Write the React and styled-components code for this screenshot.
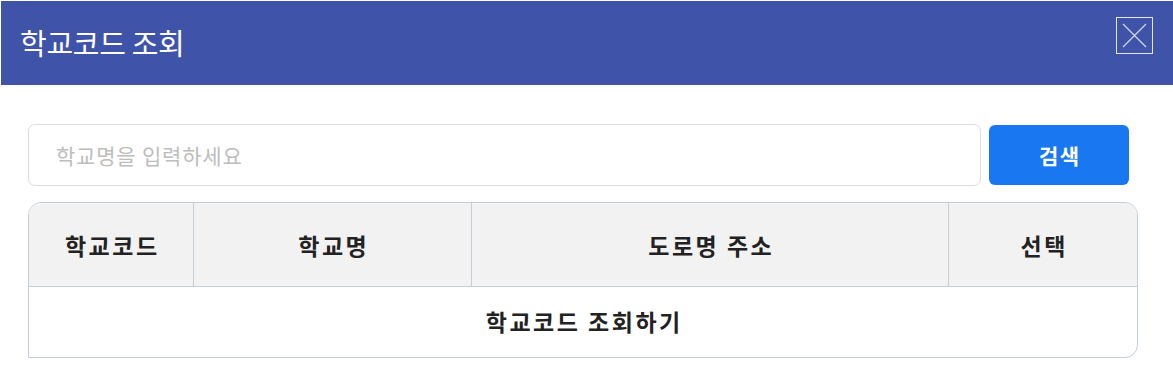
import React from "react";
import styled, { createGlobalStyle } from "styled-components";

const Global = createGlobalStyle`
  html, body { margin: 0; padding: 0; background: #fff; }
  body { font-family: "Noto Sans CJK KR", "Noto Sans", sans-serif; }
  * { box-sizing: border-box; }
`;

const Modal = styled.div`
  width: 1173px;
  height: 373px;
  background: #fff;
  display: flex;
  flex-direction: column;
  padding: 1px 0 0 1px;
`;

const Header = styled.header`
  height: 84px;
  background: #3f53a9;
  display: flex;
  align-items: center;
  justify-content: space-between;
  padding: 0 20px 0 19px;
`;

const Title = styled.h1`
  margin: 0;
  margin-top: -2px;
  color: #fff;
  font-size: 29px;
  font-weight: 400;
  letter-spacing: -0.3px;
`;

const CloseButton = styled.button`
  width: 37px;
  height: 37px;
  margin-top: -16px;
  border: 1px solid rgba(255, 255, 255, 0.85);
  background: transparent;
  padding: 0;
  display: flex;
  align-items: center;
  justify-content: center;
  cursor: pointer;
`;

const Body = styled.div`
  padding: 39px 35px 0 27px;
  display: flex;
  flex-direction: column;
  gap: 16px;
`;

const SearchRow = styled.div`
  display: flex;
  align-items: center;
  gap: 8px;
`;

const Input = styled.input`
  flex: 1;
  height: 62px;
  border: 1px solid #dcdcdc;
  border-radius: 7px;
  padding: 0 27px;
  font-family: inherit;
  font-size: 21px;
  letter-spacing: 0.8px;
  color: #333;
  outline: none;
  &::placeholder { color: #bdbdbd; }
`;

const SearchButton = styled.button`
  width: 140px;
  height: 60px;
  margin-right: 9px;
  border: none;
  border-radius: 6px;
  background: #1a77f2;
  color: #fff;
  font-family: inherit;
  font-size: 21px;
  font-weight: 700;
  letter-spacing: 1.5px;
  padding: 0 0 0 1.5px;
  cursor: pointer;
`;

const Table = styled.div`
  border: 1px solid #c5cdd8;
  border-radius: 13px 13px 13px 0;
  overflow: hidden;
  display: grid;
  grid-template-columns: 164px 278px 477px 1fr;
`;

const HeadCell = styled.div`
  height: 84px;
  background: #f2f2f2;
  display: flex;
  align-items: center;
  justify-content: center;
  font-size: 23px;
  font-weight: 700;
  color: #222;
  letter-spacing: 2.5px;
  padding-left: 2.5px;
  border-bottom: 1px solid #c5cdd8;
  border-left: ${(p) => (p.$first ? "none" : "1px solid #c5cdd8")};
`;

const EmptyCell = styled.div`
  grid-column: 1 / -1;
  height: 70px;
  display: flex;
  align-items: center;
  justify-content: center;
  font-size: 23px;
  font-weight: 700;
  color: #222;
  letter-spacing: 2.5px;
  padding: 0 0 2px 2.5px;
`;

export default function App() {
  return (
    <>
      <Global />
      <Modal>
        <Header>
          <Title>학교코드 조회</Title>
          <CloseButton aria-label="닫기">
            <svg width="25" height="25" viewBox="0 0 25 25">
              <path d="M1 1 L24 24 M24 1 L1 24" stroke="rgba(255,255,255,0.75)" strokeWidth="1.3" />
            </svg>
          </CloseButton>
        </Header>
        <Body>
          <SearchRow>
            <Input placeholder="학교명을 입력하세요" />
            <SearchButton>검색</SearchButton>
          </SearchRow>
          <Table>
            <HeadCell $first>학교코드</HeadCell>
            <HeadCell>학교명</HeadCell>
            <HeadCell>도로명 주소</HeadCell>
            <HeadCell>선택</HeadCell>
            <EmptyCell>학교코드 조회하기</EmptyCell>
          </Table>
        </Body>
      </Modal>
    </>
  );
}
